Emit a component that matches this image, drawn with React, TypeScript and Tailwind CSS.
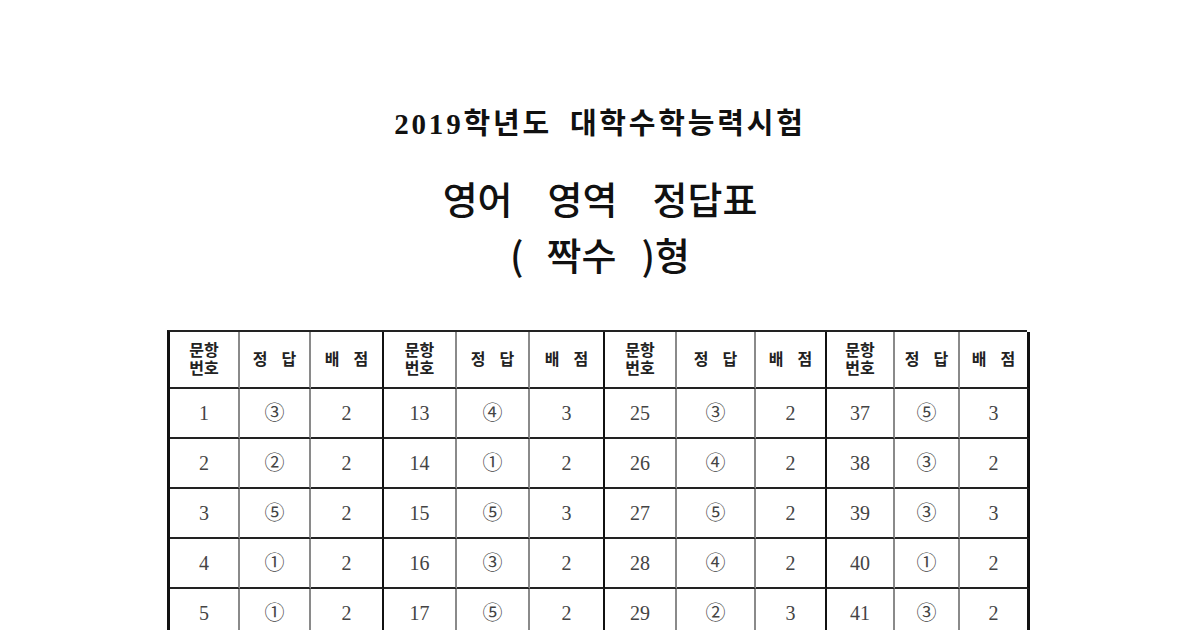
import React from "react";

type Row = [string, string, string];

// 4 groups of (문항번호, 정답, 배점) per table row
const rows: Row[][] = [
  [["1", "③", "2"], ["13", "④", "3"], ["25", "③", "2"], ["37", "⑤", "3"]],
  [["2", "②", "2"], ["14", "①", "2"], ["26", "④", "2"], ["38", "③", "2"]],
  [["3", "⑤", "2"], ["15", "⑤", "3"], ["27", "⑤", "2"], ["39", "③", "3"]],
  [["4", "①", "2"], ["16", "③", "2"], ["28", "④", "2"], ["40", "①", "2"]],
  [["5", "①", "2"], ["17", "⑤", "2"], ["29", "②", "3"], ["41", "③", "2"]],
];

const serif = "font-['Liberation_Serif','Noto_Sans_CJK_KR',serif]";
const gothic = "font-['Noto_Sans_CJK_KR','Noto_Sans',sans-serif]";

// right border colour: black at group edges, gray inside a group
const rightBorder = (col: number) =>
  col % 3 === 2 ? "border-r-2 border-r-[#111]" : "border-r-2 border-r-[#8a8a8a]";

const HeaderCell = ({ col }: { col: number }) => {
  const kind = col % 3;
  return (
    <div
      className={`h-[57px] flex items-center justify-center border-b-2 border-b-[#222] ${rightBorder(col)} ${serif} font-bold text-[#222]`}
    >
      {kind === 0 ? (
        <div className="flex flex-col items-center text-[16px] leading-[18px]">
          <span>문항</span>
          <span>번호</span>
        </div>
      ) : (
        <div className="flex gap-[14px] text-[16px]">
          <span>{kind === 1 ? "정" : "배"}</span>
          <span>{kind === 1 ? "답" : "점"}</span>
        </div>
      )}
    </div>
  );
};

export default function App() {
  return (
    <div className="w-[1200px] h-[630px] overflow-hidden bg-white">
      <div className="flex flex-col items-center pt-[106px]">
        <h1
          className={`${serif} text-[29px] leading-[36px] font-semibold tracking-[2.8px] text-[#111]`}
        >
          2019학년도<span className="inline-block w-[18px]" />대학수학능력시험
        </h1>
        <h2
          className={`${gothic} mt-[34px] text-[38px] leading-[44px] font-medium text-[#111] flex gap-[35px]`}
        >
          <span>영어</span>
          <span>영역</span>
          <span>정답표</span>
        </h2>
        <h3
          className={`${gothic} mt-[12px] text-[38px] leading-[44px] font-medium text-[#111] flex`}
        >
          <span>(</span>
          <span className="ml-[23px]">짝수</span>
          <span className="ml-[25px]">)형</span>
        </h3>
      </div>

      <div className="mt-[54px] ml-[167px] w-[860px] grid grid-cols-[70px_71px_73px_73px_73px_75px_72px_79px_71px_68px_65px_70px] border-l-[3px] border-t-2 border-l-[#111] border-t-[#222] [&>div:nth-child(12n)]:border-r-[3px]">
        {Array.from({ length: 12 }, (_, c) => (
          <HeaderCell key={`h${c}`} col={c} />
        ))}
        {rows.map((r, ri) =>
          r.flat().map((v, ci) => (
            <div
              key={`${ri}-${ci}`}
              className={`h-[50px] flex items-center justify-center border-b-2 border-b-[#222] ${rightBorder(ci)} ${serif} text-[20px] text-[#444]`}
            >
              {v}
            </div>
          ))
        )}
      </div>
    </div>
  );
}
